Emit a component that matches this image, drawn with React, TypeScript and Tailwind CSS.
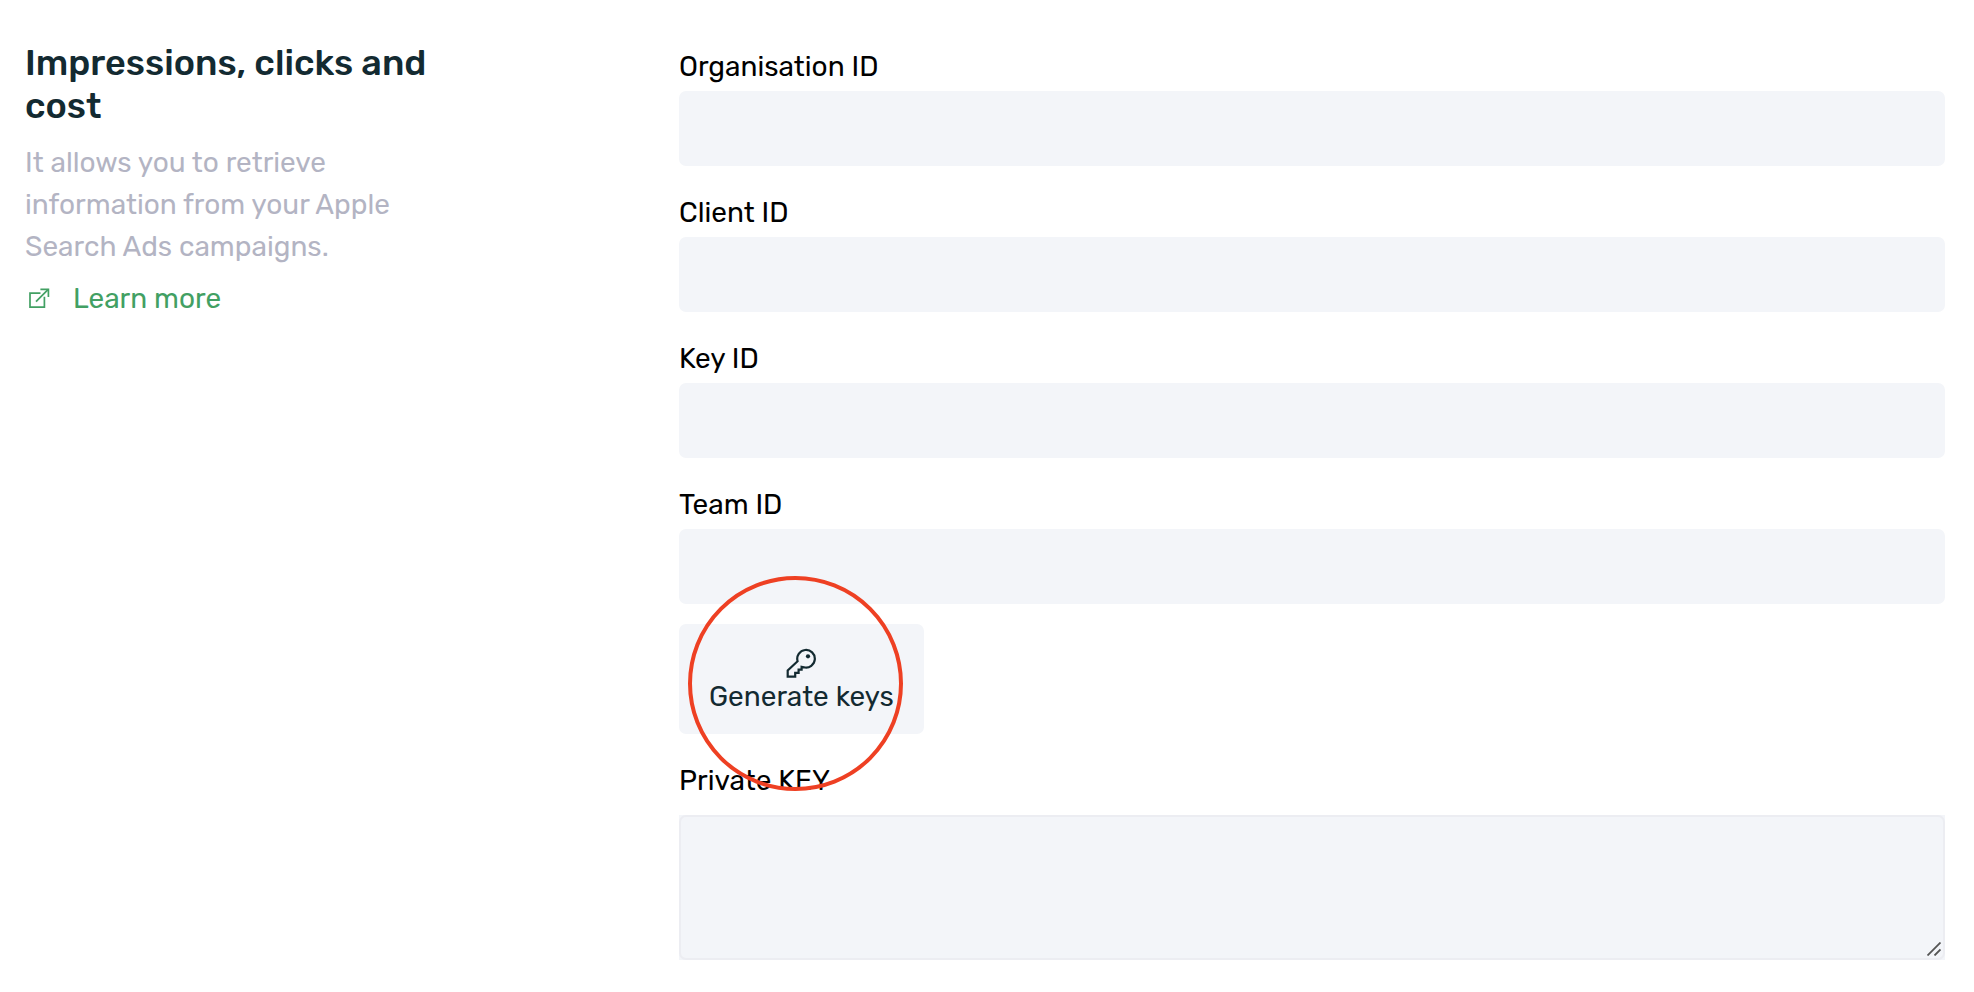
import React from "react";

const fields = [
  { id: "organisation-id", label: "Organisation ID" },
  { id: "client-id", label: "Client ID" },
  { id: "key-id", label: "Key ID" },
  { id: "team-id", label: "Team ID" },
];

function ExternalLinkIcon() {
  return (
    <svg
      viewBox="0 0 22 22"
      className="size-[22px] shrink-0"
      fill="none"
      stroke="currentColor"
      strokeWidth="1.7"
      aria-hidden="true"
    >
      <path d="M12.5 5.2H2v13.9h14.4V8.8" />
      <path d="M8 13.6 20.2 1.4" />
      <path d="M12.4 1.4h8v7.6" />
    </svg>
  );
}

function KeyIcon() {
  return (
    <svg
      viewBox="0 0 30 30"
      className="size-[30px]"
      fill="none"
      stroke="currentColor"
      strokeWidth="2.2"
      aria-hidden="true"
    >
      <path d="M11.6 13.2A8.8 8.8 0 1 1 18 19.3L15.6 18.8V21.6H12.6V24.8H9.2V28.7H1.7V22.4Z" />
      <circle cx="22" cy="8.3" r="2.1" fill="currentColor" stroke="none" />
    </svg>
  );
}

function ResizeGrip() {
  return (
    <svg
      viewBox="0 0 14 14"
      className="pointer-events-none absolute right-1 bottom-1 size-[14px]"
      fill="none"
      stroke="#555555"
      strokeWidth="1.8"
      aria-hidden="true"
    >
      <path d="M.5 13.5 13.5.5M7.5 13.5l6-6" />
    </svg>
  );
}

export default function App() {
  return (
    <main className="grid grid-cols-[34.4%_minmax(0,1fr)] bg-white pb-8 font-[Rubik,Roboto,sans-serif] text-[28px] leading-[42px] text-black">
      <section className="flex flex-col items-start pt-[41px] pr-6 pl-[25px]">
        <h2 className="max-w-[430px] text-[36px] leading-[43px] font-medium text-[#132a31]">
          Impressions, clicks and cost
        </h2>
        <p className="mt-[15px] max-w-[430px] text-[#b3b4c3]">
          It allows you to retrieve information from your Apple Search Ads campaigns.
        </p>
        <a href="#learn-more" className="mt-[10px] flex items-center gap-[23px] pl-[3px] text-[#42a063]">
          <ExternalLinkIcon />
          Learn more
        </a>
      </section>

      <form className="flex flex-col items-start pt-[46px] pr-[29px]">
        <div className="flex w-full flex-col gap-[26px]">
          {fields.map((field) => (
            <div key={field.id} className="flex flex-col gap-[3px]">
              <label htmlFor={field.id}>{field.label}</label>
              <input
                id={field.id}
                type="text"
                className="h-[75px] w-full rounded-[7px] bg-[#f3f5f9] px-5 outline-none"
              />
            </div>
          ))}
        </div>

        <div className="relative mt-5">
          <button
            type="button"
            className="flex h-[110px] flex-col items-center justify-center rounded-[7px] bg-[#f3f5f9] px-[30px] pt-1 leading-[37px] text-[#132a31]"
          >
            <KeyIcon />
            Generate keys
          </button>
          <span className="pointer-events-none absolute -top-12 left-[9px] z-10 size-[215px] rounded-full border-4 border-[#ee4023]" />
        </div>

        <div className="mt-[26px] flex w-full flex-col gap-[13px]">
          <label htmlFor="private-key">Private KEY</label>
          <div className="relative bg-[#f3f5f9]">
            <textarea
              id="private-key"
              className="block h-[145px] w-full resize-none rounded-[7px] border-2 border-[#ecedf2] bg-[#f3f5f9] p-5 outline-none"
            />
            <ResizeGrip />
          </div>
        </div>
      </form>
    </main>
  );
}
